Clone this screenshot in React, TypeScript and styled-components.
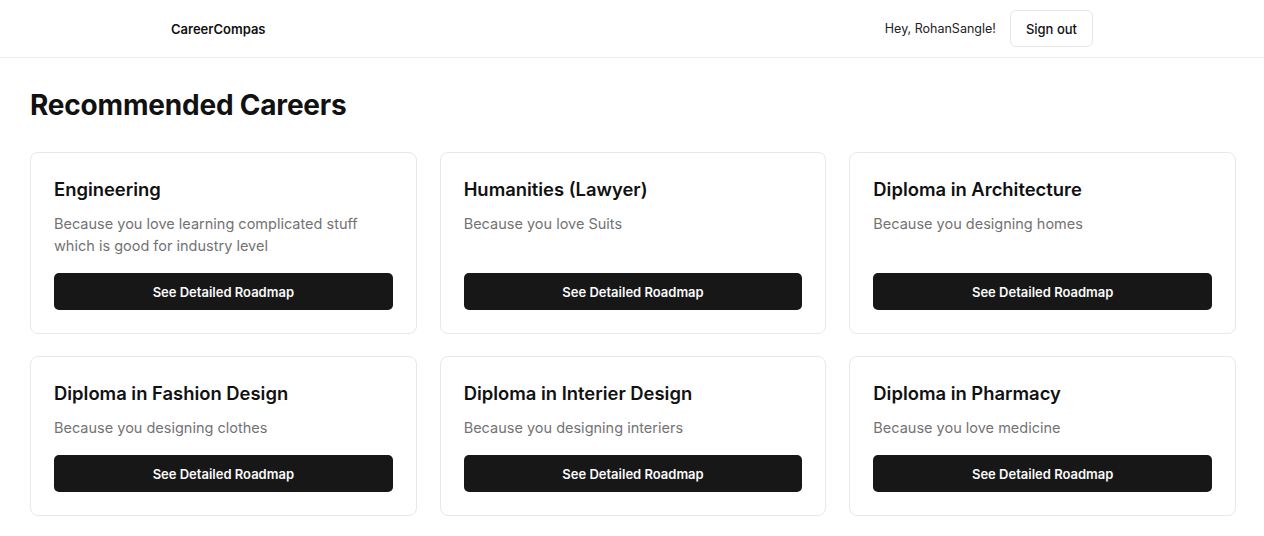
import styled, { createGlobalStyle } from "styled-components";

const GlobalStyle = createGlobalStyle`
  body {
    margin: 0;
    background: #ffffff;
    color: #111111;
    font-family: Inter, "Noto Sans", "Liberation Sans", sans-serif;
  }
`;

const Header = styled.header`
  border-bottom: 1px solid #ececec;
`;

const HeaderInner = styled.div`
  display: flex;
  align-items: center;
  justify-content: space-between;
  max-width: 922px;
  height: 57px;
  margin: 0 auto;
`;

const Logo = styled.div`
  font-size: 13px;
  font-weight: 600;
  color: #111111;
`;

const UserArea = styled.div`
  display: flex;
  align-items: center;
  gap: 14px;
`;

const Greeting = styled.span`
  font-size: 12.5px;
  color: #222222;
`;

const OutlineButton = styled.button`
  height: 37px;
  padding: 0 15px;
  border: 1px solid #e6e6e6;
  border-radius: 6px;
  background: #ffffff;
  font-family: inherit;
  font-size: 13px;
  font-weight: 500;
  color: #111111;
`;

const Main = styled.main`
  padding: 30px 28px 20px 30px;
`;

const PageTitle = styled.h1`
  margin: 0 0 30px;
  font-size: 28px;
  line-height: 34px;
  font-weight: 700;
  letter-spacing: -0.2px;
`;

const Grid = styled.div`
  display: grid;
  grid-template-columns: repeat(3, 1fr);
  gap: 22px 23px;
`;

const Card = styled.div`
  display: flex;
  flex-direction: column;
  padding: 24px 23px 23px;
  border: 1px solid #e8e8e8;
  border-radius: 8px;
`;

const CardTitle = styled.h3`
  margin: 0;
  font-size: 18.4px;
  line-height: 24px;
  font-weight: 600;
  color: #111111;
`;

const Reason = styled.p`
  margin: 12px 0 16px;
  font-size: 14.5px;
  line-height: 22px;
  color: #737373;
`;

const RoadmapButton = styled.button`
  margin-top: auto;
  height: 37px;
  border: none;
  border-radius: 5px;
  background: #171717;
  color: #fafafa;
  font-family: inherit;
  font-size: 13px;
  font-weight: 600;
`;

const careers = [
  {
    title: "Engineering",
    reason:
      "Because you love learning complicated stuff which is good for industry level",
  },
  { title: "Humanities (Lawyer)", reason: "Because you love Suits" },
  { title: "Diploma in Architecture", reason: "Because you designing homes" },
  { title: "Diploma in Fashion Design", reason: "Because you designing clothes" },
  {
    title: "Diploma in Interier Design",
    reason: "Because you designing interiers",
  },
  { title: "Diploma in Pharmacy", reason: "Because you love medicine" },
];

const App: React.FC = () => {
  return (
    <>
      <GlobalStyle />
      <Header>
        <HeaderInner>
          <Logo>CareerCompas</Logo>
          <UserArea>
            <Greeting>Hey, RohanSangle!</Greeting>
            <OutlineButton>Sign out</OutlineButton>
          </UserArea>
        </HeaderInner>
      </Header>
      <Main>
        <PageTitle>Recommended Careers</PageTitle>
        <Grid>
          {careers.map((c) => (
            <Card key={c.title}>
              <CardTitle>{c.title}</CardTitle>
              <Reason>{c.reason}</Reason>
              <RoadmapButton>See Detailed Roadmap</RoadmapButton>
            </Card>
          ))}
        </Grid>
      </Main>
    </>
  );
};

export default App;
